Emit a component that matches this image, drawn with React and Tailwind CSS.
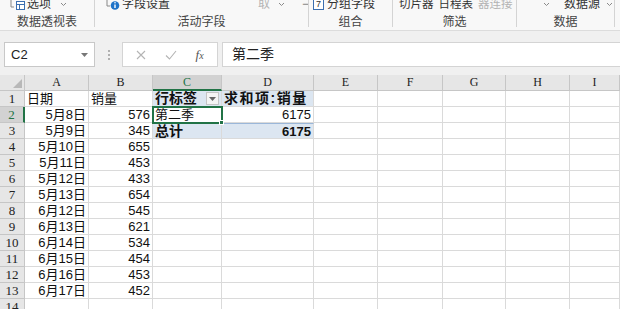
const cols = ["A", "B", "C", "D", "E", "F", "G", "H", "I"];

const rows = [
  ["日期", "销量"],
  ["5月8日", "576"],
  ["5月9日", "345"],
  ["5月10日", "655"],
  ["5月11日", "453"],
  ["5月12日", "433"],
  ["5月13日", "654"],
  ["6月12日", "545"],
  ["6月13日", "621"],
  ["6月14日", "534"],
  ["6月15日", "454"],
  ["6月16日", "453"],
  ["6月17日", "452"],
  ["", ""],
];

function Chevron({ className = "" }) {
  return (
    <svg width="7" height="5" viewBox="0 0 7 5" className={`shrink-0 ${className}`}>
      <path d="M1 1l2.5 2.5L6 1" fill="none" stroke="#8a8a8a" strokeWidth="1" />
    </svg>
  );
}

function Sep() {
  return <div className="w-px shrink-0 mb-[3px] bg-[#d4d4d4]" />;
}

function Ribbon() {
  const top = "-mt-[3px] h-[14px] leading-[14px] flex items-center";
  return (
    <div className="flex h-[31px] bg-[#f8f8f8] border-b border-[#dcdcdc] text-[12px] text-[#333] whitespace-nowrap">
      {/* 数据透视表 */}
      <div className="w-[94px] shrink-0 flex flex-col">
        <div className="h-[13px] overflow-hidden">
          <div className={`${top} pl-[10px]`}>
            <svg width="15" height="12" viewBox="0 0 15 12" className="shrink-0">
              <path d="M1 0v9h3" fill="none" stroke="#888" strokeWidth="1" />
              <rect x="6.5" y="3.5" width="8" height="8" fill="#fff" stroke="#3c6fb0" />
              <path d="M6.5 6.5h8M9.5 6.5v5" stroke="#3c6fb0" />
            </svg>
            <span className="ml-[2px]">选项</span>
            <Chevron className="ml-[9px]" />
          </div>
        </div>
        <div className="h-[17px] flex items-center justify-center text-[#444]">数据透视表</div>
      </div>
      <Sep />
      {/* 活动字段 */}
      <div className="w-[213px] shrink-0 flex flex-col">
        <div className="h-[13px] overflow-hidden">
          <div className={`${top} pl-[11px]`}>
            <svg width="14" height="12" viewBox="0 0 14 12" className="shrink-0">
              <path d="M1 0v8h3" fill="none" stroke="#888" strokeWidth="1" />
              <circle cx="9" cy="7.5" r="4.3" fill="#1e73c8" />
              <path d="M9 6.5v3.5" stroke="#fff" strokeWidth="1.4" />
              <circle cx="9" cy="4.8" r="0.8" fill="#fff" />
            </svg>
            <span className="ml-[2px]">字段设置</span>
            <span className="ml-[88px] text-[#b4b4b4]">取</span>
            <Chevron className="ml-[8px]" />
            <span className="ml-[17px] text-[#777]">−</span>
          </div>
        </div>
        <div className="h-[17px] flex items-center justify-center text-[#444]">活动字段</div>
      </div>
      <Sep />
      {/* 组合 */}
      <div className="w-[83px] shrink-0 flex flex-col">
        <div className="h-[13px] overflow-hidden">
          <div className={`${top} pl-[4px]`}>
            <span className="shrink-0 w-[11px] h-[11px] border border-[#3c6fb0] bg-white text-[9px] leading-[9px] flex items-center justify-center text-[#333]">
              7
            </span>
            <span className="ml-[3px]">分组字段</span>
          </div>
        </div>
        <div className="h-[17px] flex items-center justify-center text-[#444]">组合</div>
      </div>
      <Sep />
      {/* 筛选 */}
      <div className="w-[123px] shrink-0 flex flex-col">
        <div className="h-[13px] overflow-hidden">
          <div className={`${top} pl-[6px] gap-[5px] text-[11.5px]`}>
            <span>切片器</span>
            <span>日程表</span>
            <span className="text-[#b4b4b4]">器连接</span>
          </div>
        </div>
        <div className="h-[17px] flex items-center justify-center text-[#444]">筛选</div>
      </div>
      <Sep />
      {/* 数据 */}
      <div className="w-[97px] shrink-0 flex flex-col">
        <div className="h-[13px] overflow-hidden">
          <div className={`${top} pl-[26px]`}>
            <Chevron />
            <span className="ml-[14px]">数据源</span>
            <Chevron className="ml-[6px]" />
          </div>
        </div>
        <div className="h-[17px] flex items-center justify-center text-[#444]">数据</div>
      </div>
      <Sep />
      <div className="flex-1" />
    </div>
  );
}

function FormulaBar() {
  return (
    <div className="h-[44px] bg-[#f0f0f0] flex items-start pt-[11px] pl-[4px]">
      <div className="w-[91px] h-[25px] bg-white border border-[#c8c8c8] flex items-center pl-[6px] pr-[6px]">
        <span className="text-[13px] text-[#222]">C2</span>
        <svg width="7" height="4" viewBox="0 0 7 4" className="ml-auto">
          <path d="M0 0h7L3.5 4z" fill="#777" />
        </svg>
      </div>
      <div className="w-[27px] h-[25px] flex flex-col items-center justify-center gap-[2px]">
        <span className="w-[2px] h-[2px] bg-[#b0b0b0]" />
        <span className="w-[2px] h-[2px] bg-[#b0b0b0]" />
        <span className="w-[2px] h-[2px] bg-[#b0b0b0]" />
      </div>
      <div className="w-[96px] h-[25px] bg-white border border-[#d4d4d4] flex items-center justify-around px-[4px]">
        <svg width="10" height="10" viewBox="0 0 10 10">
          <path d="M1 1l8 8M9 1l-8 8" stroke="#b4b4b4" strokeWidth="1.1" />
        </svg>
        <svg width="12" height="10" viewBox="0 0 12 10">
          <path d="M1 5.5l3.5 3.5L11 1" fill="none" stroke="#b4b4b4" strokeWidth="1.1" />
        </svg>
        <span className="text-[13px] italic text-[#555] font-['Liberation_Serif',serif]">
          f<span className="text-[10px]">x</span>
        </span>
      </div>
      <div className="ml-[4px] flex-1 h-[25px] bg-white border border-[#d4d4d4] border-r-0 flex items-center pl-[9px]">
        <span className="text-[14px] text-[#222]">第二季</span>
      </div>
    </div>
  );
}

function Grid() {
  const cellBase =
    "h-[16px] border-r border-b border-[#dadada] text-[13px] leading-[15px] px-[2px] whitespace-nowrap";
  const bold = "text-[14px] font-bold";
  const hdr = "h-[16px] text-center leading-[15px] font-['Liberation_Serif',serif]";
  return (
    <div className="grid grid-cols-[25px_64px_64px_69px_92px_64px_65px_63px_64px_1fr] auto-rows-[16px]">
      {/* column header row */}
      <div className="h-[16px] bg-[#e6e6e6] border-r border-b border-[#c6c6c6] flex items-end justify-end pr-[2px] pb-[2px]">
        <svg width="9" height="9" viewBox="0 0 9 9">
          <path d="M9 0v9H0z" fill="#b8b8b8" />
        </svg>
      </div>
      {cols.map((c) => (
        <div
          key={c}
          className={
            c === "C"
              ? `${hdr} text-[12px] bg-[#d2d2d2] border-r border-[#c6c6c6] border-b-2 border-b-[#217346] text-[#217346]`
              : `${hdr} text-[12px] bg-[#e6e6e6] border-r border-b border-[#c6c6c6] text-[#222]`
          }
        >
          {c}
        </div>
      ))}

      {rows.map((r, i) => {
        const n = i + 1;
        return [
          <div
            key={`h${n}`}
            className={
              n === 2
                ? `${hdr} text-[13px] bg-[#d2d2d2] border-r-2 border-r-[#217346] border-b border-[#c6c6c6] text-[#217346]`
                : `${hdr} text-[13px] bg-[#e6e6e6] border-r border-b border-[#c6c6c6] text-[#222]`
            }
          >
            {n}
          </div>,
          <div key={`a${n}`} className={`${cellBase} ${n === 1 ? "text-left" : "text-right"}`}>
            {r[0]}
          </div>,
          <div key={`b${n}`} className={`${cellBase} ${n === 1 ? "text-left" : "text-right"}`}>
            {r[1]}
          </div>,
          n === 1 ? (
            <div key="c1" className={`${cellBase} ${bold} bg-[#dce6f1] flex items-center`}>
              <span>行标签</span>
              <span className="ml-auto w-[13px] h-[13px] bg-[#f4f4f4] border border-[#c4c4c4] flex items-center justify-center">
                <svg width="7" height="4" viewBox="0 0 7 4">
                  <path d="M0 0h7L3.5 4z" fill="#666" />
                </svg>
              </span>
            </div>
          ) : n === 2 ? (
            <div key="c2" className={`${cellBase} relative`}>
              第二季
              <div className="absolute -left-[1px] -top-[1px] w-[71px] h-[18px] border-2 border-[#217346] pointer-events-none" />
              <div className="absolute -right-[3px] -bottom-[3px] w-[5px] h-[5px] bg-[#217346] border border-white" />
            </div>
          ) : n === 3 ? (
            <div key="c3" className={`${cellBase} ${bold} bg-[#dce6f1] border-t border-t-[#9bb7d9] leading-[14px]`}>
              总计
            </div>
          ) : (
            <div key={`c${n}`} className={cellBase} />
          ),
          n === 1 ? (
            <div key="d1" className={`${cellBase} ${bold} tracking-[1.5px] bg-[#dce6f1]`}>
              求和项:销量
            </div>
          ) : n === 2 ? (
            <div key="d2" className={`${cellBase} text-right`}>
              6175
            </div>
          ) : n === 3 ? (
            <div key="d3" className={`${cellBase} font-bold text-right bg-[#dce6f1] border-t border-t-[#9bb7d9] leading-[14px]`}>
              6175
            </div>
          ) : (
            <div key={`d${n}`} className={cellBase} />
          ),
          ...["e", "f", "g", "h", "i"].map((k) => <div key={`${k}${n}`} className={cellBase} />),
        ];
      })}
    </div>
  );
}

export default function App() {
  return (
    <div className="w-[620px] h-[309px] overflow-hidden bg-white text-[#111] font-['Liberation_Sans','Noto_Sans_CJK_SC',sans-serif]">
      <Ribbon />
      <FormulaBar />
      <Grid />
    </div>
  );
}
